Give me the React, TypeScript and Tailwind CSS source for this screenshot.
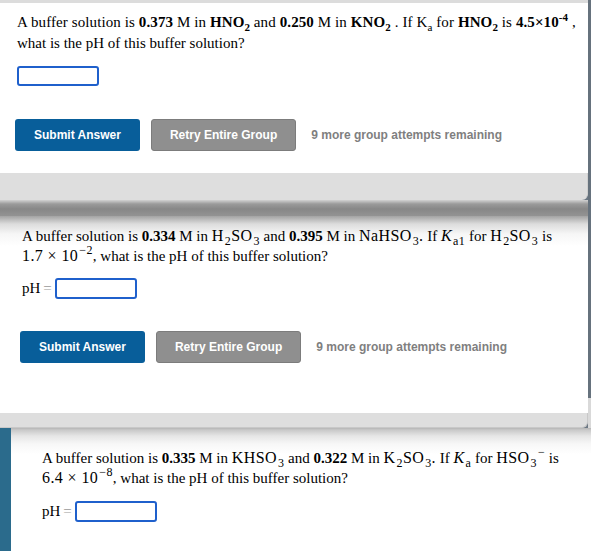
import React from "react";

const serif = { fontFamily: '"Liberation Serif", "Times New Roman", serif' };
const sans = { fontFamily: '"Liberation Sans", Arial, Helvetica, sans-serif' };

function Sub({ children }: { children: React.ReactNode }) {
  return <span className="relative top-[4px] text-[11px] leading-none">{children}</span>;
}
function Sup({ children }: { children: React.ReactNode }) {
  return <span className="relative -top-[6px] text-[11px] leading-none">{children}</span>;
}
function MSub({ children }: { children: React.ReactNode }) {
  return <span className="relative top-[4px] text-[12px] leading-none ml-[1px]">{children}</span>;
}
function MSup({ children }: { children: React.ReactNode }) {
  return <span className="relative -top-[7px] text-[12px] leading-none ml-[1px]">{children}</span>;
}
function M({ children }: { children: React.ReactNode }) {
  return <span className="text-[16px] tracking-[0.4px]">{children}</span>;
}

function Buttons() {
  return (
    <div className="flex items-center" style={sans}>
      <button className="h-[32px] px-[19px] rounded-[3px] bg-[#085e9a] text-white text-[12px] font-bold">
        Submit Answer
      </button>
      <button className="ml-[11px] h-[32px] px-[18px] rounded-[3px] bg-[#8f8f8f] border border-[#7c7c7c] text-white text-[12px] font-bold">
        Retry Entire Group
      </button>
      <span className="ml-[15px] text-[12px] font-bold text-[#7f7f7f]">9 more group attempts remaining</span>
    </div>
  );
}

function PhRow() {
  return (
    <div className="flex items-center h-[20px] text-[15px] text-black" style={serif}>
      <span>pH</span>
      <span className="ml-[3px] text-[#9a9a9a]">=</span>
      <span className="ml-[3px] w-[82px] h-[21px] border-2 border-[#1f60cc] rounded-[3px] bg-white" />
    </div>
  );
}

export default function App() {
  return (
    <div className="w-[591px] h-[551px] overflow-hidden bg-[#6b7783] flex flex-col">
      {/* Card 1 */}
      <div className="flex h-[200px] shrink-0">
        <div className="w-[588px] flex flex-col">
          <div className="h-[3px] bg-[#dcdcdc]" />
          <div className="h-[170px] bg-white flex flex-col">
            <div className="pt-[9px] pl-[17px] text-[15px] leading-[21px] text-black" style={serif}>
              <div className="whitespace-nowrap tracking-[0.1px]">
                A buffer solution is <b>0.373</b> M in <b>HNO<Sub>2</Sub></b> and <b>0.250</b> M in{" "}
                <b>KNO<Sub>2</Sub></b> . If K<Sub>a</Sub> for <b>HNO<Sub>2</Sub></b> is{" "}
                <b>4.5×10<Sup>-4</Sup></b> ,
              </div>
              <div className="whitespace-nowrap">what is the pH of this buffer solution?</div>
            </div>
            <div className="pl-[17px] mt-[12px]">
              <div className="w-[82px] h-[20px] border-2 border-[#1f60cc] rounded-[3px]" />
            </div>
            <div className="pl-[15px] mt-[33px]">
              <Buttons />
            </div>
          </div>
          <div className="h-[27px] bg-[#dedede] rounded-br-[6px] border-r border-[#cfcfcf]" />
        </div>
        <div className="flex-1 bg-[#66727d]" />
      </div>

      {/* shadow between cards */}
      <div className="flex h-[16px] shrink-0">
        <div className="w-[588px] bg-[linear-gradient(to_bottom,#d2d2d2_0px,#9a9a9a_4px,#878787_9px,#939393_16px)]" />
        <div className="flex-1 bg-[#66727d]" />
      </div>

      {/* Card 2 */}
      <div className="flex h-[212px] shrink-0">
        <div className="w-[588px] flex flex-col">
          <div className="h-[197px] bg-[linear-gradient(to_bottom,#a3a3a3_0px,#dcdcdc_8px,#f6f6f6_18px,#ffffff_30px)] flex flex-col">
            <div className="pt-[10px] pl-[22px] text-[15px] leading-[20px] text-black" style={serif}>
              <div className="whitespace-nowrap">
                A buffer solution is <b>0.334</b> M in{" "}
                <M>
                  H<MSub>2</MSub>SO<MSub>3</MSub>
                </M>{" "}
                and <b>0.395</b> M in{" "}
                <M>
                  NaHSO<MSub>3</MSub>.
                </M>{" "}
                If{" "}
                <M>
                  <i>K</i>
                  <MSub>a1</MSub>
                </M>{" "}
                for{" "}
                <M>
                  H<MSub>2</MSub>SO<MSub>3</MSub>
                </M>{" "}
                is
              </div>
              <div className="whitespace-nowrap">
                <M>
                  1.7 × 10<MSup>−2</MSup>
                </M>
                , what is the pH of this buffer solution?
              </div>
            </div>
            <div className="pl-[22px] mt-[12px]">
              <PhRow />
            </div>
            <div className="pl-[20px] mt-[33px]">
              <Buttons />
            </div>
          </div>
          <div className="h-[15px] bg-[#dedede] rounded-br-[6px] border-r border-b border-[#c8c8c8]" />
        </div>
        <div className="flex-1 flex flex-col">
          <div className="flex-1 bg-[#66727d]" />
          <div className="h-[30px] bg-[#d9d9d9]" />
        </div>
      </div>

      {/* Card 3 */}
      <div className="flex flex-1">
        <div className="w-[11px] bg-[#2b6b8c]" />
        <div className="flex-1 bg-[linear-gradient(to_bottom,#b5b5b5_0px,#c9c9c9_2px,#e6e6e6_8px,#f7f7f7_16px,#ffffff_26px)] flex flex-col">
          <div className="pt-[20px] pl-[31px] text-[15px] leading-[20px] text-black" style={serif}>
            <div className="whitespace-nowrap">
              A buffer solution is <b>0.335</b> M in{" "}
              <M>
                KHSO<MSub>3</MSub>
              </M>{" "}
              and <b>0.322</b> M in{" "}
              <M>
                K<MSub>2</MSub>SO<MSub>3</MSub>.
              </M>{" "}
              If{" "}
              <M>
                <i>K</i>
                <MSub>a</MSub>
              </M>{" "}
              for{" "}
              <M>
                HSO<MSub>3</MSub>
                <MSup>−</MSup>
              </M>{" "}
              is
            </div>
            <div className="whitespace-nowrap">
              <M>
                6.4 × 10<MSup>−8</MSup>
              </M>
              , what is the pH of this buffer solution?
            </div>
          </div>
          <div className="pl-[31px] mt-[13px]">
            <PhRow />
          </div>
        </div>
      </div>
    </div>
  );
}
